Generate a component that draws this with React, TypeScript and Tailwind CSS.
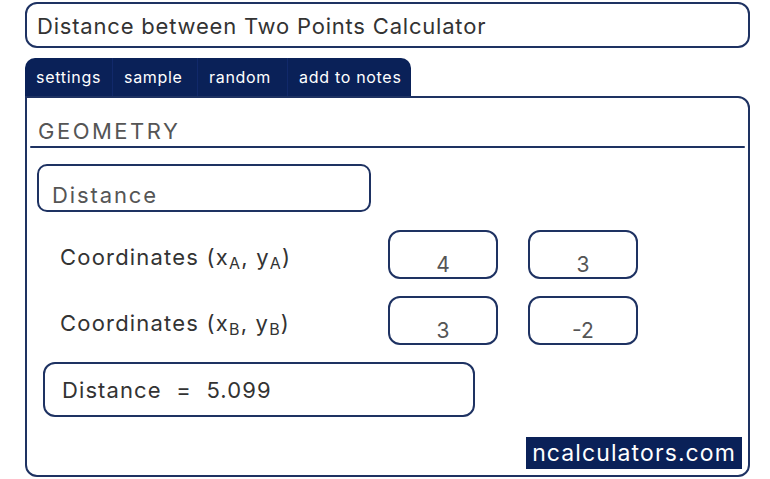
import React from "react";

const navy = "border-[#1e3262]";

function NumBox({ value }: { value: string }) {
  return (
    <div
      className={`flex h-[49px] w-[110px] items-center justify-center rounded-[12px] border-2 ${navy} pt-[20px] text-[21px] text-[#555]`}
    >
      {value}
    </div>
  );
}

function CoordRow({ sub, a, b }: { sub: string; a: string; b: string }) {
  return (
    <div className="flex items-center">
      <div className="w-[361px] pl-[33px] pt-[6px] text-[22px] tracking-[1.2px] text-[#333]">
        Coordinates (x<sub className="text-[16px]">{sub}</sub>, y
        <sub className="text-[16px]">{sub}</sub>)
      </div>
      <NumBox value={a} />
      <div className="w-[30px]" />
      <NumBox value={b} />
    </div>
  );
}

const tabs = [
  { label: "settings", w: "w-[88px]" },
  { label: "sample", w: "w-[85px]" },
  { label: "random", w: "w-[90px]" },
  { label: "add to notes", w: "w-[123px]" },
];

export default function App() {
  return (
    <div className="h-[479px] w-[770px] overflow-hidden bg-white pt-[2px] font-['Inter',sans-serif]">
      {/* Title */}
      <div
        className={`ml-[25px] flex h-[46px] w-[725px] items-center rounded-[12px] border-2 ${navy} pl-[10px] pt-[3px] text-[22px] tracking-[0.8px] text-[#333]`}
      >
        Distance between Two Points Calculator
      </div>

      {/* Tabs */}
      <div className="ml-[25px] mt-[10px] flex h-[38px] w-[386px] items-center rounded-t-[10px] bg-[#0a2158] text-[16px] tracking-[0.7px] text-white">
        {tabs.map((t, i) => (
          <div
            key={t.label}
            className={`flex h-full items-center ${t.w} pl-[11px] ${i < tabs.length - 1 ? "border-r border-[#11296a]" : ""}`}
          >
            {t.label}
          </div>
        ))}
      </div>

      {/* Panel */}
      <div
        className={`ml-[25px] flex h-[381px] w-[725px] flex-col rounded-b-[12px] rounded-tr-[12px] border-2 ${navy}`}
      >
        <div className="pl-[11px] pt-[20px] text-[22px] leading-[26px] tracking-[2.5px] text-[#555]">
          GEOMETRY
        </div>
        <div className="mx-[3px] mt-[2px] h-[2px] rounded-full bg-[#1e3262]" />

        <div
          className={`ml-[10px] mt-[16px] flex h-[48px] w-[334px] items-center rounded-[10px] border-2 ${navy} pl-[13px] pt-[15px] text-[22px] tracking-[1.9px] text-[#555]`}
        >
          Distance
        </div>

        <div className="mt-[18px] flex flex-col gap-[17px]">
          <CoordRow sub="A" a="4" b="3" />
          <CoordRow sub="B" a="3" b="-2" />
        </div>

        <div
          className={`ml-[16px] mt-[17px] flex h-[55px] w-[432px] items-center rounded-[12px] border-2 ${navy} pl-[17px] pt-[2px] text-[22px] tracking-[1.1px] text-[#333]`}
        >
          Distance&nbsp; = &nbsp;5.099
        </div>

        <div className="mr-[6px] mt-[20px] flex justify-end">
          <div className="flex h-[32px] items-center bg-[#0a2158] px-[6px] text-[23px] tracking-[1.1px] text-white">
            ncalculators.com
          </div>
        </div>
      </div>
    </div>
  );
}
